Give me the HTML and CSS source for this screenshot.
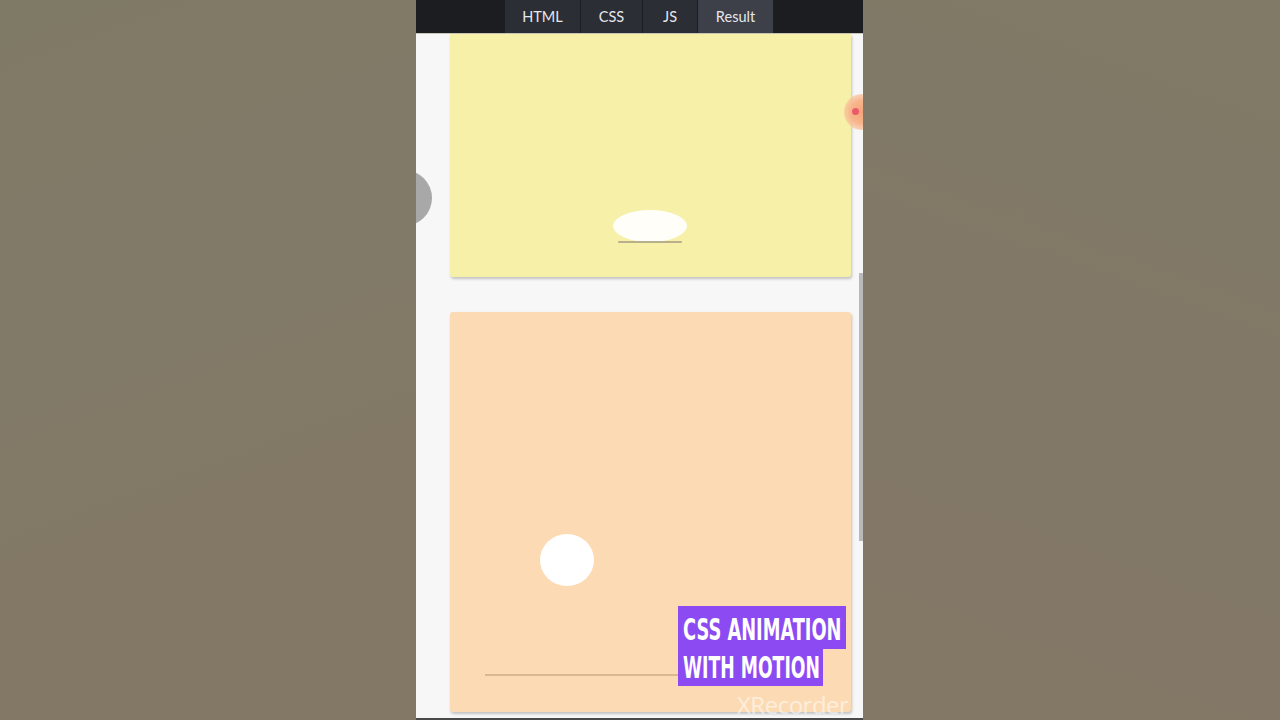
FILE: index.html
```html
<!DOCTYPE html>
<html>
<head>
<meta charset="utf-8">
<link rel="stylesheet" href="styles.css">
</head>
<body>
<div class="side side-left"></div>
<div class="phone">
  <div class="topbar">
    <div class="tab">HTML</div>
    <div class="tab">CSS</div>
    <div class="tab">JS</div>
    <div class="tab active">Result</div>
  </div>
  <div class="content">
    <div class="card card-yellow">
      <div class="stage">
        <div class="ellipse"></div>
        <div class="ellipse-shadow"></div>
      </div>
    </div>
    <div class="card card-peach">
      <div class="stage">
        <div class="ball"></div>
        <div class="ground"></div>
      </div>
    </div>
  </div>
  <div class="grey-bubble"></div>
  <div class="orange-bubble"><span class="dot"></span></div>
  <div class="scrollbar"></div>
  <div class="caption">
    <div class="cap-line cap-1"><span class="cap-text">CSS ANIMATION</span></div>
    <div class="cap-line cap-2"><span class="cap-text">WITH MOTION</span></div>
  </div>
  <div class="watermark">XRecorder</div>
</div>
<div class="side side-right"></div>
</body>
</html>
```

FILE: styles.css
```css
html, body {
  margin: 0;
  padding: 0;
  width: 1280px;
  height: 720px;
  overflow: hidden;
}
body {
  display: flex;
  background: #817a68;
  font-family: Lato, "Noto Sans", sans-serif;
}
.side {
  height: 720px;
}
.side-left {
  width: 416px;
  flex: none;
  background: linear-gradient(160deg, #7f7a66 0%, #817a68 35%, #837866 70%);
}
.side-right {
  flex: 1;
  background: linear-gradient(200deg, #807a66 0%, #827867 50%, #837866 100%);
}
.phone {
  position: relative;
  width: 447px;
  flex: none;
  height: 720px;
  background: #f7f7f7;
  display: flex;
  flex-direction: column;
  overflow: hidden;
  border-bottom: 2px solid #4a4a4a;
  box-sizing: border-box;
}
.topbar {
  height: 33px;
  flex: none;
  background: #1b1d20;
  display: flex;
  padding-left: 89px;
  gap: 1px;
  border-bottom: 1px solid #c9c6b5;
}
.tab {
  height: 33px;
  display: flex;
  align-items: center;
  justify-content: center;
  background: #2b2e35;
  color: #e6e7ea;
  font-size: 14.5px;
}
.tab:nth-child(1) { width: 75px; }
.tab:nth-child(2) { width: 61px; }
.tab:nth-child(3) { width: 54px; }
.tab:nth-child(4) { width: 75px; }
.tab.active {
  background: #3d4049;
}
.content {
  flex: 1;
  padding-left: 34px;
  display: flex;
  flex-direction: column;
  gap: 35px;
}
.card {
  width: 401px;
  border-radius: 3px;
  box-shadow: 1px 2px 3px rgba(0, 0, 0, 0.22);
}
.card-yellow {
  height: 243px;
  background: #f7f0a9;
  border-radius: 0 0 3px 3px;
}
.card-peach {
  height: 400px;
  background: #fcdbb4;
}
.stage {
  position: relative;
  width: 100%;
  height: 100%;
}
.ellipse {
  position: absolute;
  left: 163px;
  top: 176px;
  width: 74px;
  height: 32px;
  border-radius: 50%;
  background: #fffef8;
}
.ellipse-shadow {
  position: absolute;
  left: 168px;
  top: 207px;
  width: 64px;
  height: 2px;
  background: #b8b08c;
  border-radius: 1px;
}
.ball {
  position: absolute;
  left: 90px;
  top: 222px;
  width: 54px;
  height: 52px;
  border-radius: 50%;
  background: #ffffff;
}
.ground {
  position: absolute;
  left: 35px;
  top: 362px;
  width: 300px;
  height: 2px;
  background: #dcb592;
}
.grey-bubble {
  position: absolute;
  left: -12px;
  top: 170px;
  width: 28px;
  height: 56px;
  border-radius: 0 28px 28px 0;
  background: #a8a8a8;
}
.orange-bubble {
  position: absolute;
  left: 428px;
  top: 94px;
  width: 36px;
  height: 36px;
  border-radius: 50%;
  background: radial-gradient(circle at 50% 50%, #f5a478 0%, #f7b58c 45%, rgba(250, 205, 170, 0.6) 80%, rgba(250, 220, 190, 0) 100%);
}
.orange-bubble .dot {
  position: absolute;
  left: 8px;
  top: 14px;
  width: 7px;
  height: 7px;
  border-radius: 50%;
  background: #ec5a6a;
}
.scrollbar {
  position: absolute;
  left: 443px;
  top: 273px;
  width: 4px;
  height: 268px;
  background: #b9b9b9;
}
.caption {
  position: absolute;
  left: 262px;
  top: 606px;
  display: flex;
  flex-direction: column;
  align-items: flex-start;
}
.cap-line {
  background: #8c4bf2;
  overflow: hidden;
  white-space: nowrap;
  box-sizing: border-box;
  padding-left: 5px;
}
.cap-1 {
  width: 168px;
  height: 43px;
  padding-top: 9px;
}
.cap-2 {
  width: 145px;
  height: 38px;
  margin-top: -1px;
  padding-top: 5px;
}
.cap-text {
  display: inline-block;
  color: #ffffff;
  font-family: "DejaVu Sans", sans-serif;
  font-stretch: condensed;
  font-weight: bold;
  font-size: 30px;
  line-height: 30px;
  transform: scaleX(0.66);
  transform-origin: left center;
}
.cap-2 .cap-text {
  transform: scaleX(0.64);
}
.watermark {
  position: absolute;
  left: 321px;
  top: 688px;
  font-family: "Open Sans", sans-serif;
  font-size: 24px;
  letter-spacing: -0.5px;
  color: rgba(255, 255, 255, 0.55);
}
```
